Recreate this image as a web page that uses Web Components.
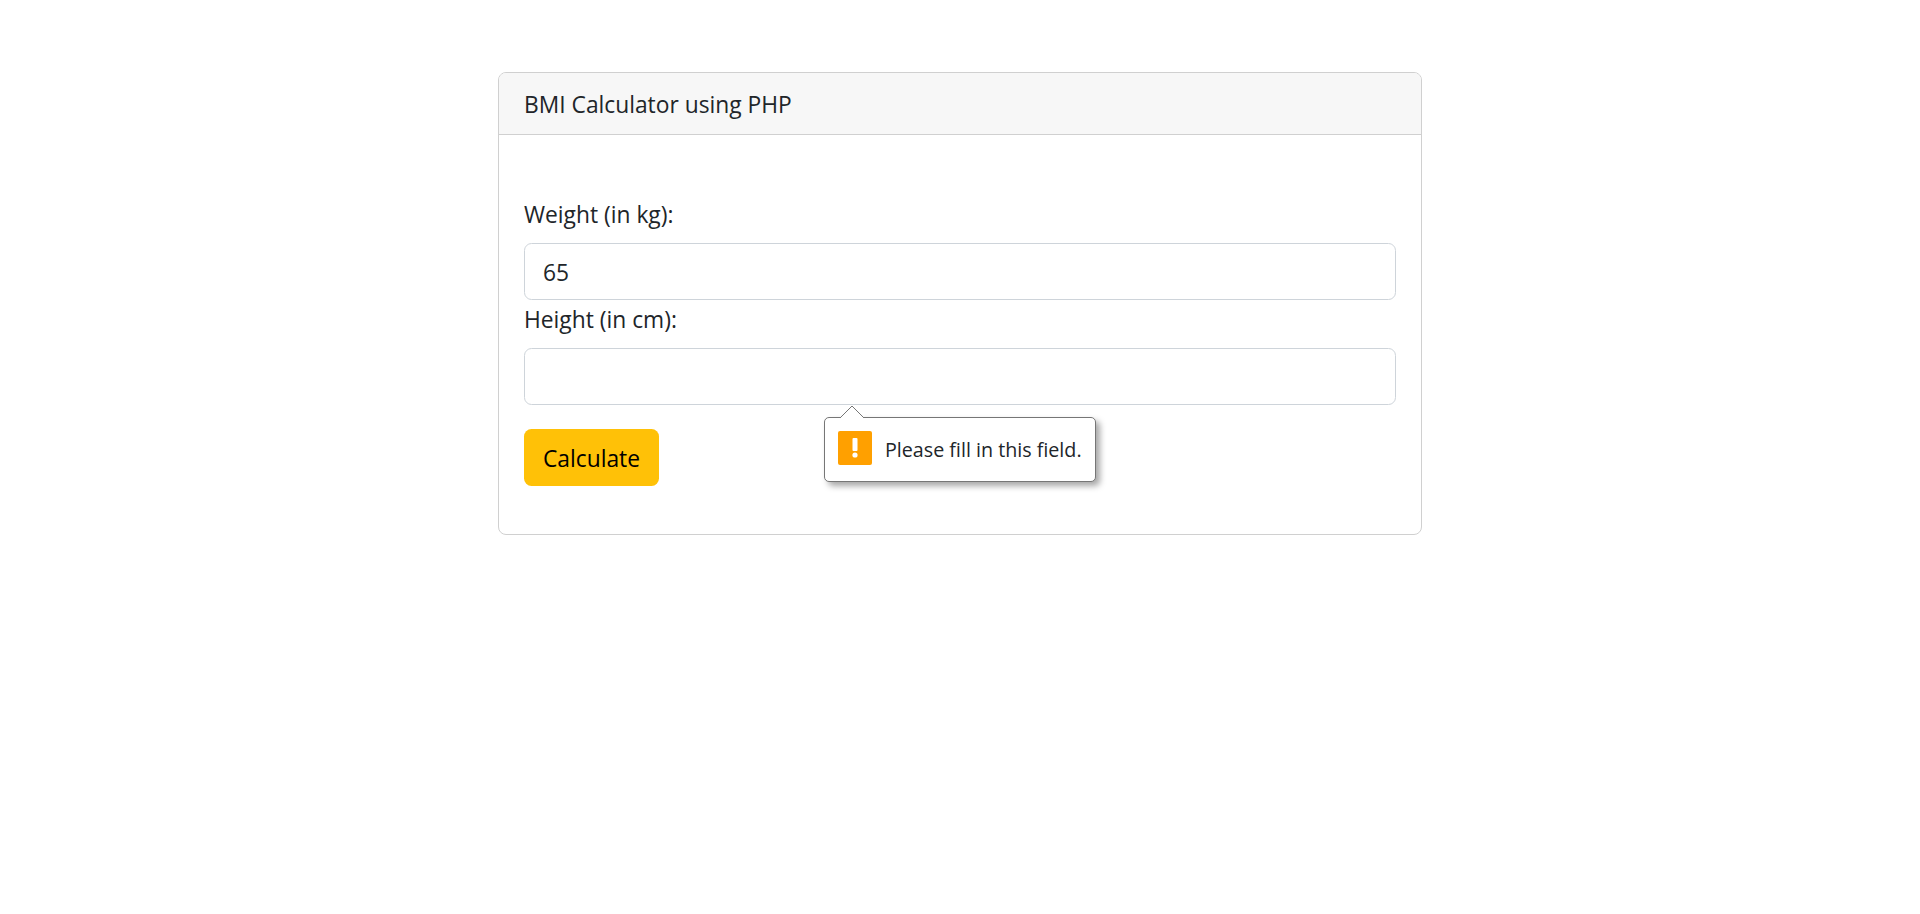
<!DOCTYPE html>
<html lang="en">
<head>
<meta charset="utf-8">
<title>BMI Calculator using PHP</title>
<style>
  body { margin: 0; background: #fff; color: #212529; font: 22.8px/30px "Open Sans", "Noto Sans", sans-serif; }
</style>
</head>
<body>
<template id="bmi-card">
  <style>
    :host { display: block; width: 924px; margin: 72px auto 0; box-sizing: border-box; background: #fff; border: 1px solid #d0d0d0; border-radius: 8px; overflow: hidden; position: relative; }
    header { height: 62px; box-sizing: border-box; padding: 17px 25px 0; background: #f7f7f7; border-bottom: 1px solid #d0d0d0; }
    main { padding: 65px 25px 48px; }
  </style>
  <header><slot name="title"></slot></header>
  <main><slot></slot></main>
</template>

<template id="bmi-field">
  <style>
    :host { display: block; margin-bottom: 5px; }
    label { display: block; }
    .wrap { position: relative; margin-top: 13px; }
    input { display: block; width: 100%; height: 57px; box-sizing: border-box; padding: 2px 18px 0; border: 1px solid #ced4da; border-radius: 7.5px; font: inherit; color: inherit; background: #fff; outline: none; }
  </style>
  <label for="f"><slot></slot></label>
  <div class="wrap"><input id="f" type="text"><slot name="popup"></slot></div>
</template>

<template id="bmi-button">
  <style>
    :host { display: block; width: 135px; margin-top: 24px; }
    button { display: block; width: 135px; height: 57px; padding: 2px 0 0; border: 0; border-radius: 7.5px; background: #ffc107; color: #000; font: inherit; }
  </style>
  <button type="submit"><slot></slot></button>
</template>

<template id="bmi-tooltip">
  <style>
    :host { position: absolute; left: 300px; top: 100%; margin-top: 12px; display: flex; align-items: center; gap: 13px; width: 272px; height: 65px; box-sizing: border-box; padding: 0 13px; background: #fff; border: 1px solid #767676; border-radius: 5px; box-shadow: 4px 4px 6px rgba(0,0,0,.35); font-size: 19.7px; white-space: nowrap; z-index: 2; }
    svg.icon { flex: none; width: 34px; height: 34px; margin-bottom: 3px; }
    svg.arrow { position: absolute; left: 15px; top: -13px; width: 24px; height: 13px; }
  </style>
  <svg class="arrow" viewBox="0 0 24 13"><path d="M0 13 L12 1 L24 13" fill="#fff" stroke="#767676" stroke-width="1"/></svg>
  <svg class="icon" viewBox="0 0 34 34"><rect width="34" height="34" rx="2" fill="#ffa000"/><rect x="14.5" y="7" width="5" height="13" rx="1" fill="#fff"/><circle cx="17" cy="24" r="2.6" fill="#fff"/></svg>
  <span><slot></slot></span>
</template>

<bmi-card>
  <span slot="title">BMI Calculator using PHP</span>
  <bmi-field value="65">Weight (in kg):</bmi-field>
  <bmi-field>Height (in cm):<bmi-tooltip slot="popup">Please fill in this field.</bmi-tooltip></bmi-field>
  <bmi-button>Calculate</bmi-button>
</bmi-card>

<script>
  class TemplatedElement extends HTMLElement {
    constructor() {
      super();
      const t = document.getElementById(this.localName);
      this.attachShadow({mode: 'open'}).appendChild(t.content.cloneNode(true));
    }
  }

  class BmiCard extends TemplatedElement {}
  class BmiButton extends TemplatedElement {}
  class BmiTooltip extends TemplatedElement {}

  class BmiField extends TemplatedElement {
    connectedCallback() {
      this.shadowRoot.querySelector('input').value = this.getAttribute('value') || '';
    }
  }

  customElements.define('bmi-card', BmiCard);
  customElements.define('bmi-field', BmiField);
  customElements.define('bmi-button', BmiButton);
  customElements.define('bmi-tooltip', BmiTooltip);
</script>
</body>
</html>
